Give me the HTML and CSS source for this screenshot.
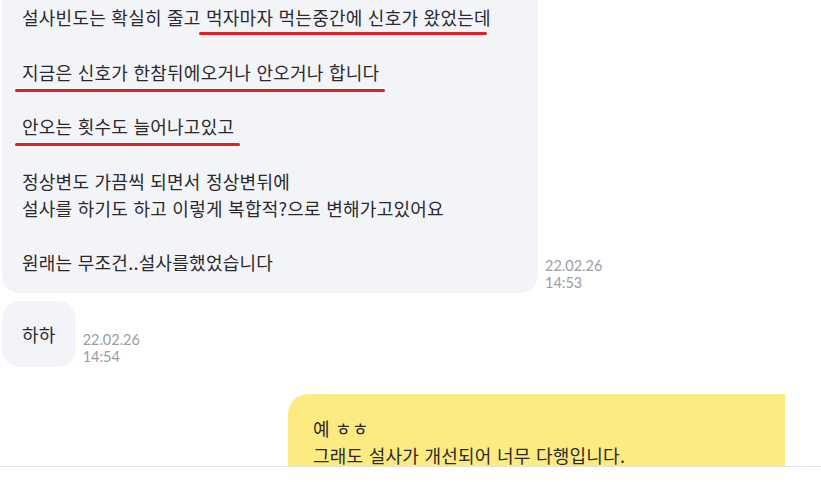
FILE: index.html
```html
<!DOCTYPE html>
<html lang="ko">
<head>
  <meta charset="UTF-8" />
  <meta name="viewport" content="width=device-width, initial-scale=1.0" />
  <title>상담 대화</title>
  <link rel="stylesheet" href="styles.css">
</head>
<body>
  <div class="chat">
    <div class="messages">
      <div class="row">
        <div class="bubble in long">
          <p><span>설사빈도는 확실히 줄고 </span><span class="mark m1">먹자마자 먹는중간에 신호가 왔었는데</span></p>
          <p>&nbsp;</p>
          <p><span class="mark">지금은 신호가 한참뒤에오거나 안오거나 합니다</span></p>
          <p>&nbsp;</p>
          <p><span class="mark">안오는 횟수도 늘어나고있고</span></p>
          <p>&nbsp;</p>
          <p>정상변도 가끔씩 되면서 정상변뒤에</p>
          <p>설사를 하기도 하고 이렇게 복합적?으로 변해가고있어요</p>
          <p>&nbsp;</p>
          <p>원래는 무조건..설사를했었습니다</p>
        </div>
        <div class="time">22.02.26<br>14:53</div>
      </div>

      <div class="row">
        <div class="bubble in short">
          <p>하하</p>
        </div>
        <div class="time">22.02.26<br>14:54</div>
      </div>

      <div class="row mine">
        <div class="bubble out">
          <p>예 ㅎㅎ</p>
          <p>그래도 설사가 개선되어 너무 다행입니다.</p>
        </div>
      </div>
    </div>
    <div class="composer"></div>
  </div>
</body>
</html>
```

FILE: styles.css
```css
body {
  margin: 0;
  background: #fff;
  font-family: 'Noto Sans CJK KR', 'Noto Sans', sans-serif;
  color: #2a2a2e;
}
.chat {
  width: 821px;
  height: 482px;
  display: flex;
  flex-direction: column;
  overflow: hidden;
}
.messages {
  height: 466px;
  overflow: hidden;
  display: flex;
  flex-direction: column;
}
.row {
  display: flex;
  align-items: flex-end;
  gap: 7px;
  padding-left: 2px;
  margin-bottom: 8px;
}
.row:first-child {
  margin-top: -15px;
}
.row.mine {
  justify-content: flex-end;
  padding-right: 36px;
  margin-top: 19px;
}
.bubble {
  font-size: 18px;
  letter-spacing: 0.25px;
  line-height: 27.25px;
  border-radius: 18px;
  box-sizing: border-box;
}
.bubble p {
  margin: 0;
  white-space: nowrap;
}
.bubble.in {
  background: #f3f4f8;
}
.bubble.long {
  width: 536px;
  padding: 19px 20px 16px;
}
.bubble.short {
  padding: 20px 20px 19px;
}
.bubble.out {
  width: 497px;
  height: 120px;
  background: #fdea81;
  padding: 21px 25px;
  border-radius: 20px 0 0 0;
  flex-shrink: 0;
}
.mark {
  position: relative;
}
.mark::after {
  content: "";
  position: absolute;
  left: -7px;
  right: -6px;
  bottom: -7px;
  height: 3px;
  border-radius: 2px;
  background: #dc2028;
}
.mark.m1::after {
  left: -7px;
  right: 4px;
  bottom: -5px;
}
.time {
  font-family: Lato, 'Noto Sans', sans-serif;
  font-size: 14.5px;
  line-height: 17px;
  color: #9b9ba4;
  margin-bottom: 2px;
}
.composer {
  flex: 1;
  background: #fff;
  border-top: 1px solid #e1e1e4;
}
```
